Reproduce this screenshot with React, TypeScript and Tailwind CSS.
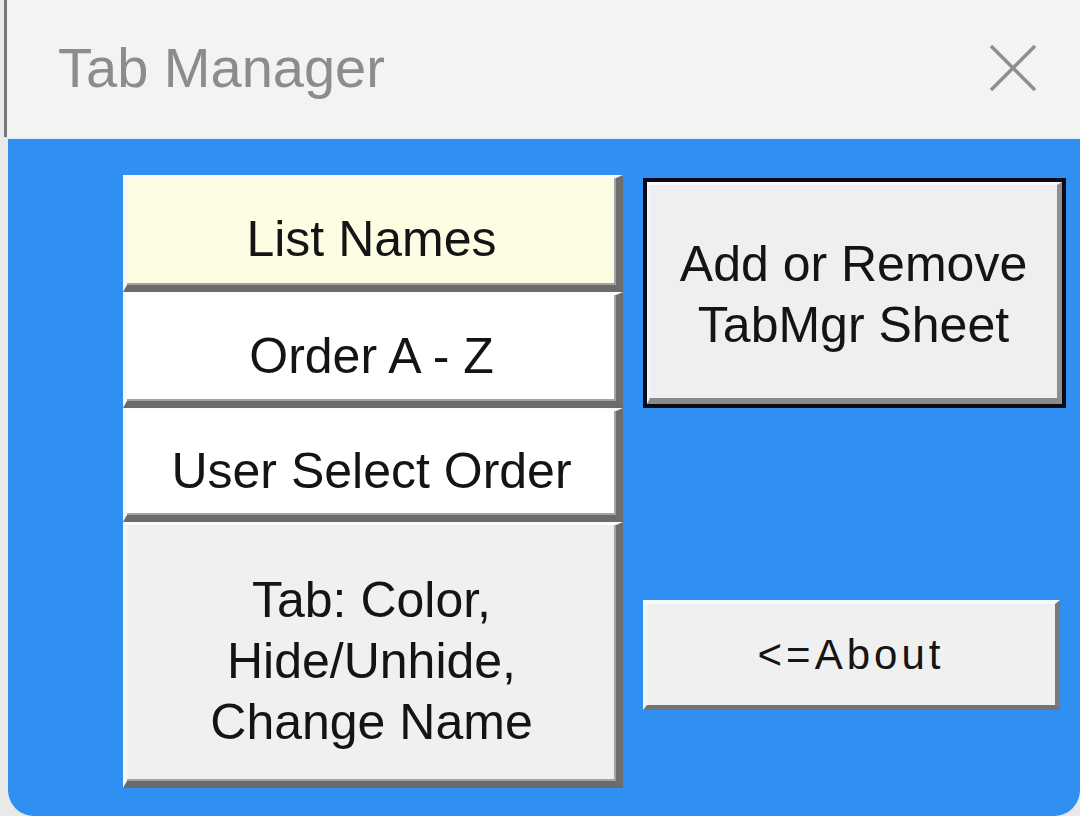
import React from 'react';

const font = { fontFamily: '"Liberation Sans", Arial, sans-serif' };

function LeftButton({ children, className }: { children: React.ReactNode; className: string }) {
    return (
        <button
            type="button"
            className={`flex w-full items-center justify-center border-t-[3px] border-l-[4px] border-b-[7px] border-r-[7px] border-t-[#f7fbff] border-l-[#f4f9fd] border-b-[#6b6b6b] border-r-[#6e6e6e] pt-[16px] text-center text-[50px] leading-[61px] text-[#141414] shadow-[inset_-2px_-2px_0_#a3a3a3] ${className}`}
            style={font}
        >
            {children}
        </button>
    );
}

export default function App() {
    return (
        <div className="flex h-[816px] w-[1080px] flex-col overflow-hidden bg-[#e9e9e9]" style={font}>
            {/* title bar */}
            <div className="ml-[4px] flex h-[137px] items-center justify-between border-l-[3px] border-[#767676] bg-[#f3f3f3] pl-[51px] pr-[42px]">
                <span className="pb-[2px] text-[56px] text-[#8c8c8c]">Tab Manager</span>
                <svg width="50" height="50" viewBox="0 0 50 50" className="mb-[2px]">
                    <path d="M3 3 L47 47 M47 3 L3 47" stroke="#8e8e8e" strokeWidth="3.5" fill="none" />
                </svg>
            </div>
            <div className="ml-[8px] h-[2px] bg-[#e3f1fc]" />

            {/* form body */}
            <div className="ml-[8px] flex flex-1 rounded-b-[26px] bg-[#2f90f2] pl-[115px] pt-[36px]">
                <div className="flex w-[500px] flex-col">
                    <LeftButton className="h-[117px] bg-[#fdfde3]">List Names</LeftButton>
                    <LeftButton className="h-[116px] bg-white">Order A - Z</LeftButton>
                    <LeftButton className="h-[114px] bg-white">User Select Order</LeftButton>
                    <LeftButton className="h-[266px] bg-[#f0f0f0] pt-[12px]">
                        Tab: Color,
                        <br />
                        Hide/Unhide,
                        <br />
                        Change Name
                    </LeftButton>
                </div>

                <div className="ml-[20px] flex w-[423px] flex-col">
                    <div className="mt-[3px] h-[230px] border-[4px] border-[#0b0b18]">
                        <button
                            type="button"
                            className="flex h-full w-full items-center justify-center border-t-[3px] border-l-[3px] border-b-[6px] border-r-[5px] border-t-[#fbfbfd] border-l-[#f6f6f8] border-b-[#8a8a8a] border-r-[#8f8f8f] bg-[#efeff2] pt-[6px] text-center text-[50px] leading-[61px] text-[#141414]"
                            style={font}
                        >
                            Add or Remove
                            <br />
                            TabMgr Sheet
                        </button>
                    </div>

                    <button
                        type="button"
                        className="mt-[192px] flex h-[110px] w-[417px] items-center justify-center border-t-[4px] border-l-[4px] border-b-[5px] border-r-[5px] border-t-[#f3fbff] border-l-[#eef8fd] border-b-[#747474] border-r-[#7a7a7a] bg-[#f0f0f0] text-[42px] tracking-[4px] text-[#151515]"
                        style={font}
                    >
                        &lt;=About
                    </button>
                </div>
            </div>
        </div>
    );
}
